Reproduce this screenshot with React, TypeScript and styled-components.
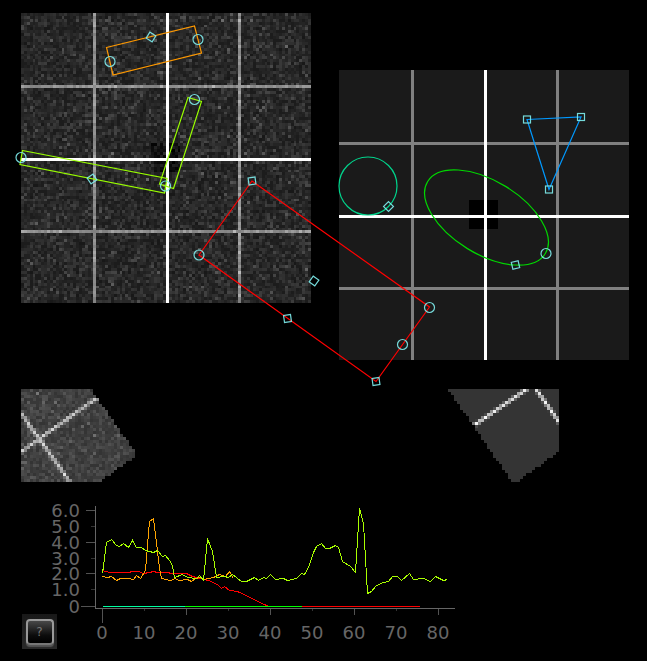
import React from "react";
import styled, { createGlobalStyle } from "styled-components";

const GlobalStyle = createGlobalStyle`
  * { box-sizing: border-box; }
  body { margin: 0; background: #000; font-family: "DejaVu Sans", sans-serif; }
`;

const Page = styled.main`
  display: flex;
  flex-direction: column;
  min-height: 100vh;
  padding: 13px 18px 12px 21px;
  background: #000;
`;

const Scene = styled.section`
  position: relative;
  display: flex;
  align-items: flex-start;
  gap: 28px;
`;

const Raster = styled.svg<{ $drop?: number }>`
  flex: none;
  display: block;
  width: 290px;
  height: 290px;
  margin-top: ${(p) => p.$drop ?? 0}px;
`;

const RoiLayer = styled.svg`
  position: absolute;
  inset: 0;
  width: 100%;
  height: 100%;
  overflow: visible;
`;

const Slices = styled.section`
  display: flex;
  gap: 310px;
  margin-top: 29px;
`;

const Slice = styled.svg`
  flex: none;
  display: block;
  height: 93px;
`;

const PlotRow = styled.section`
  display: flex;
  align-items: flex-end;
  margin-top: 19px;
`;

const Chart = styled.svg`
  flex: none;
  display: block;
  width: 440px;
  height: 148px;
  margin-left: -35px;
  font-size: 18px;
  fill: #666;
  pointer-events: none;
`;

const HelpButton = styled.button`
  flex: none;
  display: grid;
  place-items: center;
  width: 35px;
  height: 35px;
  margin-left: 1px;
  padding: 0;
  border: 0;
  background: linear-gradient(#181818, #2a2a2a);
`;

const HelpFace = styled.span`
  display: grid;
  place-items: center;
  width: 28px;
  height: 26px;
  border: 2px solid #999;
  border-bottom-color: #777;
  border-radius: 4px;
  box-shadow: 0 2px 1px #555;
  background: linear-gradient(#484848, #0c0c0c 65%, #000);
  color: #777;
  font: 12px/16px "DejaVu Sans", sans-serif;
`;

/* ---------- raster data ---------- */

function makeRandom(seed: number) {
  let s = seed;
  return () => {
    s = (s + 0x6d2b79f5) | 0;
    let t = Math.imul(s ^ (s >>> 15), 1 | s);
    t = (t + Math.imul(t ^ (t >>> 7), 61 | t)) ^ t;
    return ((t ^ (t >>> 14)) >>> 0) / 4294967296;
  };
}

function normal(random: () => number) {
  return Math.sqrt(-2 * Math.log(1 - random())) * Math.cos(2 * Math.PI * random());
}

type Layers = [number, string][];

/* Groups cells of equal grey into one path; `edge` maps a cell index to its pixel edge. */
function collect(
  cols: number,
  rows: number,
  edge: (i: number) => number,
  level: (x: number, y: number) => number | null,
): Layers {
  const map = new Map<number, string>();
  for (let y = 0; y < rows; y++) {
    for (let x = 0; x < cols; x++) {
      const v = level(x, y);
      if (v === null) continue;
      const g = v > 250 ? 255 : Math.max(0, Math.round(v / 4) * 4);
      const cell = `M${edge(x)} ${edge(y)}H${edge(x + 1)}V${edge(y + 1)}H${edge(x)}Z`;
      map.set(g, (map.get(g) ?? "") + cell);
    }
  }
  return [...map.entries()];
}

/* 100 image cells over 290px, each edge on a whole pixel. */
const imageEdge = (i: number) => Math.ceil((i * 29) / 10 - 0.5);
const sliceEdge = (i: number) => i * 3;

function baseLevel(x: number, y: number) {
  if (x === 50 || y === 50) return 10;
  if (x === 25 || y === 25 || x === 75 || y === 75) return 5;
  if (x >= 45 && x < 55 && y >= 45 && y < 55) return 0;
  return 1;
}

const noiseRandom = makeRandom(17);
const noisyImage = collect(
  100,
  100,
  imageEdge,
  (x, y) => (baseLevel(x, y) + Math.abs(normal(noiseRandom)) * 0.8) * 25.5,
);

type Point = [number, number];
type Segment = [Point, Point];

function inside(px: number, py: number, poly: Point[]) {
  let hit = false;
  for (let i = 0, j = poly.length - 1; i < poly.length; j = i++) {
    const [xi, yi] = poly[i];
    const [xj, yj] = poly[j];
    if (yi > py !== yj > py && px < ((xj - xi) * (py - yi)) / (yj - yi) + xi) hit = !hit;
  }
  return hit;
}

function distance(px: number, py: number, [[ax, ay], [bx, by]]: Segment) {
  const dx = bx - ax;
  const dy = by - ay;
  return Math.abs(dy * (px - ax) - dx * (py - ay)) / Math.hypot(dx, dy);
}

function sliceLayers(
  cols: number,
  poly: Point[],
  lines: Segment[],
  glow: number,
  noise: number,
  seed: number,
) {
  const random = makeRandom(seed);
  return collect(cols, 31, sliceEdge, (x, y) => {
    const px = x * 3 + 1.5;
    const py = y * 3 + 1.5;
    if (!inside(px, py, poly)) return null;
    const near = Math.min(...lines.map((l) => distance(px, py, l)));
    const line = Math.max(0, 1 - near / 2.7) * glow;
    return 51 + line + Math.abs(normal(random)) * noise;
  });
}

const leftSlice = sliceLayers(
  39,
  [[0, 0], [70, 0], [116, 66], [78, 93], [0, 93]],
  [[[0, 63], [74, 10]], [[0, 24], [49, 93]]],
  150,
  19,
  5,
);
const rightSlice = sliceLayers(
  37,
  [[0, 0], [111, 0], [111, 63], [69, 93], [64, 93]],
  [[[25, 37], [79, 0]], [[88, 0], [111, 33]]],
  200,
  0,
  9,
);

function Cells({ layers }: { layers: Layers }) {
  return (
    <g shapeRendering="crispEdges">
      {layers.map(([g, d]) => (
        <path key={g} d={d} fill={`rgb(${g},${g},${g})`} />
      ))}
    </g>
  );
}

/* ---------- regions of interest ---------- */

const Ring = ({ x, y }: { x: number; y: number }) => <circle cx={x} cy={y} r={5} />;
const Box = ({ x, y, turn = 0 }: { x: number; y: number; turn?: number }) => (
  <rect x={x - 3.5} y={y - 3.5} width={7} height={7} transform={`rotate(${turn} ${x} ${y})`} />
);

function Rois() {
  return (
    <RoiLayer role="img" aria-label="Regions of interest">
      <g transform="translate(-21 -13)" fill="none" strokeWidth={1.2}>
        <path stroke="#f90" d="M106.500 47.500L194.500 26L201.500 53L113 75Z" />
        <g stroke="#9f0">
          <path d="M22.500 150.500L167 178.500L164.500 193L20 164.500Z" />
          <path d="M188 97.500L201.500 101.500L173.500 188.500L159.500 184Z" />
        </g>
        <path stroke="#f00" d="M252 181L199 255L376 381.500L429.500 307Z" />
        <circle stroke="#00d48c" cx={368} cy={186} r={29} />
        <ellipse stroke="#00d800" cx={486.5} cy={217.5} rx={69} ry={36.5} transform="rotate(31.500 486.500 217.500)" />
        <path stroke="#09f" d="M527 119.500L581 117L549 189.500Z" />
        <g stroke="#7ff0f0" strokeOpacity={0.9}>
          <Ring x={110} y={61.5} />
          <Ring x={198} y={39.5} />
          <Box x={151} y={37} turn={32} />
          <Ring x={21} y={157.5} />
          <Ring x={165.5} y={186} />
          <Box x={92} y={179} turn={56} />
          <Ring x={194.5} y={99.5} />
          <Box x={252} y={181} turn={-8} />
          <Ring x={199} y={255} />
          <Box x={287.5} y={318.5} turn={-8} />
          <Box x={376} y={381.5} turn={-8} />
          <Ring x={402.5} y={344.5} />
          <Ring x={429.5} y={307.5} />
          <Box x={314} y={281} turn={36} />
          <Box x={388.5} y={206.5} turn={45} />
          <Ring x={546} y={253.5} />
          <Box x={515.5} y={265} turn={-13} />
          <Box x={527} y={119.5} />
          <Box x={581} y={117} />
          <Box x={549} y={189.5} />
        </g>
      </g>
    </RoiLayer>
  );
}

/* ---------- plot ---------- */

const orangeTrace =
  "102,576 107,577 111,576 116,580 120,578 128,578 133,579 136,575 140,578 145,570 147,545 149,521 153,518 156,542 159,568 161,578 170,580 175,578 178,580 187,579 191,581 195,578 200,577 203,579 213,577 219,574 225,576 229,571 233,578";
const limeTrace =
  "102,573 106,542 111,539 116,545 119,546 123,543 128,547 132,540 136,547 141,547 145,550 149,551 153,552 157,550 162,556 165,555 169,560 172,565 174,577 182,574 187,577 196,578 199,575 203,580 207,538 212,551 216,577 224,576 228,577 232,574 241,581 246,581 254,577 258,580 263,577 266,578 270,574 275,579 283,578 287,580 296,578 301,573 304,574 308,567 313,552 316,546 321,543 325,548 329,548 335,545 338,547 342,561 350,566 355,572 357,540 359,508 363,523 365,558 367,593 371,591 376,585 383,582 388,581 392,576 397,576 401,580 409,573 413,579 423,578 430,581 435,576 443,580 447,579";
const redTrace =
  "102,570 109,572 116,572 127,572 133,571 138,571 143,573 149,572 153,571 157,572 167,572 171,573 186,573 192,576 200,578 208,580 217,584 221,588 224,586 229,590 237,591 268,606 419,606";

const xTicks = [0, 10, 20, 30, 40, 50, 60, 70, 80];
const yTicks = [
  { label: "6.0", y: 510, x: 86 },
  { label: "5.0", y: 526, x: 91 },
  { label: "4.0", y: 542, x: 86 },
  { label: "3.0", y: 558, x: 91 },
  { label: "2.0", y: 573, x: 86 },
  { label: "1.0", y: 589, x: 91 },
  { label: "0", y: 606, x: 81 },
];

function Plot() {
  return (
    <Chart viewBox="22 501 440 148" role="img" aria-label="Region profiles">
      <g stroke="#666" shapeRendering="crispEdges">
        <path d="M95.500 506V609M95 608.500H455" fill="none" />
        {yTicks.map((t) => (
          <path key={t.label} d={`M${t.x} ${t.y + 0.5}H95`} strokeOpacity={t.x === 91 ? 0.5 : 0.8} />
        ))}
        {xTicks.map((v, i) => (
          <path
            key={v}
            d={`M${102.5 + v * 4.2} 608V${v === 0 ? 623 : i % 2 ? 611 : 615}`}
            strokeOpacity={i % 2 ? 0.5 : 0.8}
          />
        ))}
      </g>
      {yTicks.map((t) => (
        <text key={t.label} x={80} y={t.y + 7} textAnchor="end">
          {t.label}
        </text>
      ))}
      {xTicks.map((v) => (
        <text key={v} x={102 + v * 4.2} y={639} textAnchor="middle">
          {v}
        </text>
      ))}
      <g fill="none" shapeRendering="crispEdges" transform="translate(0.500 0.500)">
        <polyline points={redTrace} stroke="#f00" />
        <polyline points={orangeTrace} stroke="#ffa500" />
        <polyline points={limeTrace} stroke="#a8ff00" />
        <path d="M183 606H301" stroke="#0f0" />
        <path d="M102 606H184" stroke="#00ffa0" />
      </g>
    </Chart>
  );
}

export default function App() {
  return (
    <Page>
      <GlobalStyle />
      <Scene>
        <Raster viewBox="0 0 290 290" role="img" aria-label="Noisy image">
          <Cells layers={noisyImage} />
        </Raster>
        <Raster $drop={57} viewBox="0 0 290 290" role="img" aria-label="Clean image">
          <g shapeRendering="crispEdges">
            <path fill="#1a1a1a" d="M0 0H290V290H0Z" />
            <path fill="#000" d="M130 130h29v29h-29Z" />
            <path fill="#808080" d="M72 0h3v290h-3ZM217 0h3v290h-3ZM0 72h290v3H0ZM0 217h290v3H0Z" />
            <path fill="#fff" d="M145 0h3v290h-3ZM0 145h290v3H0Z" />
          </g>
        </Raster>
        <Rois />
      </Scene>
      <Slices>
        <Slice width={117} viewBox="0 0 117 93" role="img" aria-label="Left region slice">
          <Cells layers={leftSlice} />
        </Slice>
        <Slice width={111} viewBox="0 0 111 93" role="img" aria-label="Right region slice">
          <Cells layers={rightSlice} />
        </Slice>
      </Slices>
      <PlotRow>
        <HelpButton type="button" aria-label="Help">
          <HelpFace>?</HelpFace>
        </HelpButton>
        <Plot />
      </PlotRow>
    </Page>
  );
}
